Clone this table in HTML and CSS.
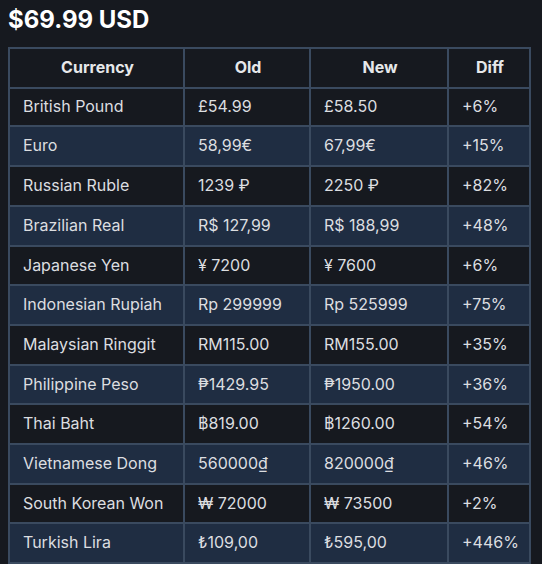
FILE: index.html
```html
<!DOCTYPE html>
<html>
<head>
<meta charset="utf-8">
<link rel="stylesheet" href="styles.css">
</head>
<body>
<h1 class="title">$69.99 USD</h1>
<table class="prices">
  <colgroup>
    <col class="c1"><col class="c2"><col class="c3"><col class="c4">
  </colgroup>
  <thead>
    <tr><th>Currency</th><th>Old</th><th>New</th><th>Diff</th></tr>
  </thead>
  <tbody>
    <tr><td>British Pound</td><td>£54.99</td><td>£58.50</td><td>+6%</td></tr>
    <tr><td>Euro</td><td>58,99€</td><td>67,99€</td><td>+15%</td></tr>
    <tr><td>Russian Ruble</td><td>1239 ₽</td><td>2250 ₽</td><td>+82%</td></tr>
    <tr><td>Brazilian Real</td><td>R$ 127,99</td><td>R$ 188,99</td><td>+48%</td></tr>
    <tr><td>Japanese Yen</td><td>¥ 7200</td><td>¥ 7600</td><td>+6%</td></tr>
    <tr><td>Indonesian Rupiah</td><td>Rp 299999</td><td>Rp 525999</td><td>+75%</td></tr>
    <tr><td>Malaysian Ringgit</td><td>RM115.00</td><td>RM155.00</td><td>+35%</td></tr>
    <tr><td>Philippine Peso</td><td>₱1429.95</td><td>₱1950.00</td><td>+36%</td></tr>
    <tr><td>Thai Baht</td><td>฿819.00</td><td>฿1260.00</td><td>+54%</td></tr>
    <tr><td>Vietnamese Dong</td><td>560000₫</td><td>820000₫</td><td>+46%</td></tr>
    <tr><td>South Korean Won</td><td>₩ 72000</td><td>₩ 73500</td><td>+2%</td></tr>
    <tr><td>Turkish Lira</td><td>₺109,00</td><td>₺595,00</td><td>+446%</td></tr>
    <tr class="empty"><td>&nbsp;</td><td>&nbsp;</td><td>&nbsp;</td><td>&nbsp;</td></tr>
  </tbody>
</table>
</body>
</html>
```
FILE: styles.css
```css
html, body {
  background: #16191f;
}
body {
  margin: 8px;
  color: #dcdee0;
  font-family: Inter, "Noto Sans", "DejaVu Sans", sans-serif;
}
.title {
  margin: 0 0 15px 0;
  font-size: 24px;
  line-height: 24px;
  font-weight: 700;
  color: #ffffff;
}
.prices {
  border-collapse: collapse;
  table-layout: fixed;
  width: 521px;
  font-size: 16px;
}
.c1 { width: 175px; }
.c2 { width: 126px; }
.c3 { width: 138px; }
.c4 { width: 82px; }
.prices th,
.prices td {
  border: 2px solid #3a4a5f;
  padding: 9px 11px 9px 13px;
  line-height: 19.7px;
  text-align: left;
  white-space: nowrap;
  overflow: hidden;
}
.prices th {
  text-align: center;
  font-weight: 700;
  color: #e6e8ea;
}
.prices tbody tr:nth-child(1) td {
  padding-top: 8px;
}
.prices tbody tr:nth-child(even) td {
  background: #1f2d42;
}
```
